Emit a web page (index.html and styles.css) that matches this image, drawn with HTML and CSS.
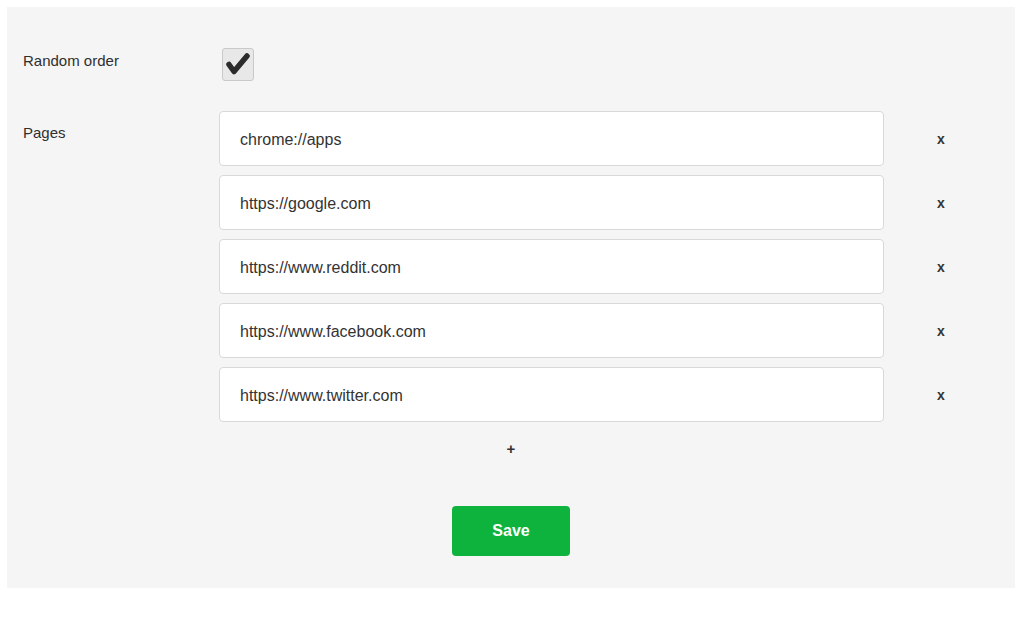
FILE: index.html
```html
<!DOCTYPE html>
<html>
<head>
<meta charset="utf-8">
<link rel="stylesheet" href="styles.css">
</head>
<body>
<div class="panel">
  <div class="row">
    <div class="label label-check">Random order</div>
    <div class="checkbox">
      <svg width="32" height="33" viewBox="0 0 32 33"><path d="M7 16.5 L12 23.5 L25 8" fill="none" stroke="#2b2b2b" stroke-width="5.5" stroke-linejoin="round" stroke-linecap="round"/></svg>
    </div>
  </div>
  <div class="row row-pages">
    <div class="label label-pages">Pages</div>
    <div class="pages">
      <div class="page"><div class="field">chrome://apps</div><div class="remove">x</div></div>
      <div class="page"><div class="field">https://google.com</div><div class="remove">x</div></div>
      <div class="page"><div class="field">https://www.reddit.com</div><div class="remove">x</div></div>
      <div class="page"><div class="field">https://www.facebook.com</div><div class="remove">x</div></div>
      <div class="page"><div class="field">https://www.twitter.com</div><div class="remove">x</div></div>
    </div>
  </div>
  <div class="add">+</div>
  <div class="actions"><button class="save">Save</button></div>
</div>
</body>
</html>
```

FILE: styles.css
```css
* { box-sizing: border-box; }
body {
  margin: 0;
  background: #ffffff;
  font-family: "Liberation Sans", Arial, sans-serif;
  color: #333333;
}
.panel {
  margin: 7px 0 0 7px;
  width: 1008px;
  height: 581px;
  background: #f5f5f5;
  padding: 41px 0 0 16px;
}
.row {
  display: flex;
  align-items: flex-start;
}
.label {
  width: 196px;
  font-size: 15px;
  line-height: 20px;
  color: #2f2f2f;
}
.label-check { padding-top: 3px; }
.label-pages { padding-top: 12px; }
.checkbox {
  margin-left: 3px;
  width: 32px;
  height: 33px;
  border: 1px solid #c9c9c9;
  border-radius: 3px;
  background: #e8e8e8;
  display: flex;
}
.checkbox svg { display: block; margin: -1px; }
.row-pages { margin-top: 30px; }
.pages {
  display: flex;
  flex-direction: column;
  gap: 9px;
}
.page {
  display: flex;
  align-items: center;
}
.field {
  width: 665px;
  height: 55px;
  background: #ffffff;
  border: 1px solid #d9d9d9;
  border-radius: 4px;
  padding: 2px 20px 0 20px;
  display: flex;
  align-items: center;
  font-size: 16px;
  color: #333333;
}
.remove {
  width: 114px;
  text-align: center;
  font-size: 14px;
  font-weight: bold;
  color: #333333;
}
.add {
  margin: 17px 0 0 -16px;
  text-align: center;
  font-size: 15px;
  line-height: 20px;
  font-weight: bold;
  color: #333333;
}
.actions {
  margin: 47px 0 0 -16px;
  display: flex;
  justify-content: center;
}
.save {
  width: 118px;
  height: 50px;
  border: none;
  border-radius: 4px;
  background: #0db33d;
  color: #ffffff;
  font-family: "Liberation Sans", Arial, sans-serif;
  font-size: 16px;
  font-weight: bold;
  padding: 0;
}
```
